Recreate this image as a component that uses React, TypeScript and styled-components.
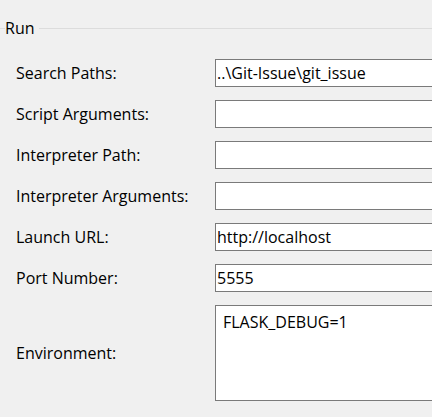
import styled, { createGlobalStyle } from 'styled-components';
import { Fragment } from 'react';

const GlobalStyle = createGlobalStyle`
  html, body {
    margin: 0;
    padding: 0;
    background: #f0f0f0;
    overflow: hidden;
  }
  body {
    font-family: "Open Sans", "Noto Sans", sans-serif;
    color: #000;
  }
`;

const Page = styled.div`
  width: 432px;
  height: 417px;
  overflow: hidden;
  padding-top: 18px;
  box-sizing: border-box;
`;

const Group = styled.fieldset`
  margin: 0;
  padding: 0 0 0 16px;
  border: none;
  border-top: 1px solid #dcdcdc;
  width: 560px;
`;

const Legend = styled.legend`
  font-size: 16px;
  padding: 0 4px 0 0;
  margin-left: -11px;
  line-height: 20px;
`;

const Form = styled.div`
  display: grid;
  grid-template-columns: 199px 260px;
  row-gap: 13px;
  align-items: center;
  margin-top: 21px;
`;

const Label = styled.label`
  font-size: 16px;
  line-height: 20px;
`;

const Field = styled.div<{ $tall?: boolean }>`
  box-sizing: border-box;
  height: ${p => (p.$tall ? '96px' : '28px')};
  border: 1px solid #7a7a7a;
  background: #fff;
  font-size: 16px;
  line-height: 20px;
  padding: ${p => (p.$tall ? '6px 7px' : '3px 1px')};
  white-space: nowrap;
`;

const rows: { label: string; value: string; tall?: boolean }[] = [
  { label: 'Search Paths:', value: '..\\Git-Issue\\git_issue' },
  { label: 'Script Arguments:', value: '' },
  { label: 'Interpreter Path:', value: '' },
  { label: 'Interpreter Arguments:', value: '' },
  { label: 'Launch URL:', value: 'http://localhost' },
  { label: 'Port Number:', value: '5555' },
  { label: 'Environment:', value: 'FLASK_DEBUG=1', tall: true },
];

export default function App() {
  return (
    <Page>
      <GlobalStyle />
      <Group>
        <Legend>Run</Legend>
        <Form>
          {rows.map(r => (
            <Fragment key={r.label}>
              <Label>{r.label}</Label>
              <Field $tall={r.tall}>{r.value}</Field>
            </Fragment>
          ))}
        </Form>
      </Group>
    </Page>
  );
}
